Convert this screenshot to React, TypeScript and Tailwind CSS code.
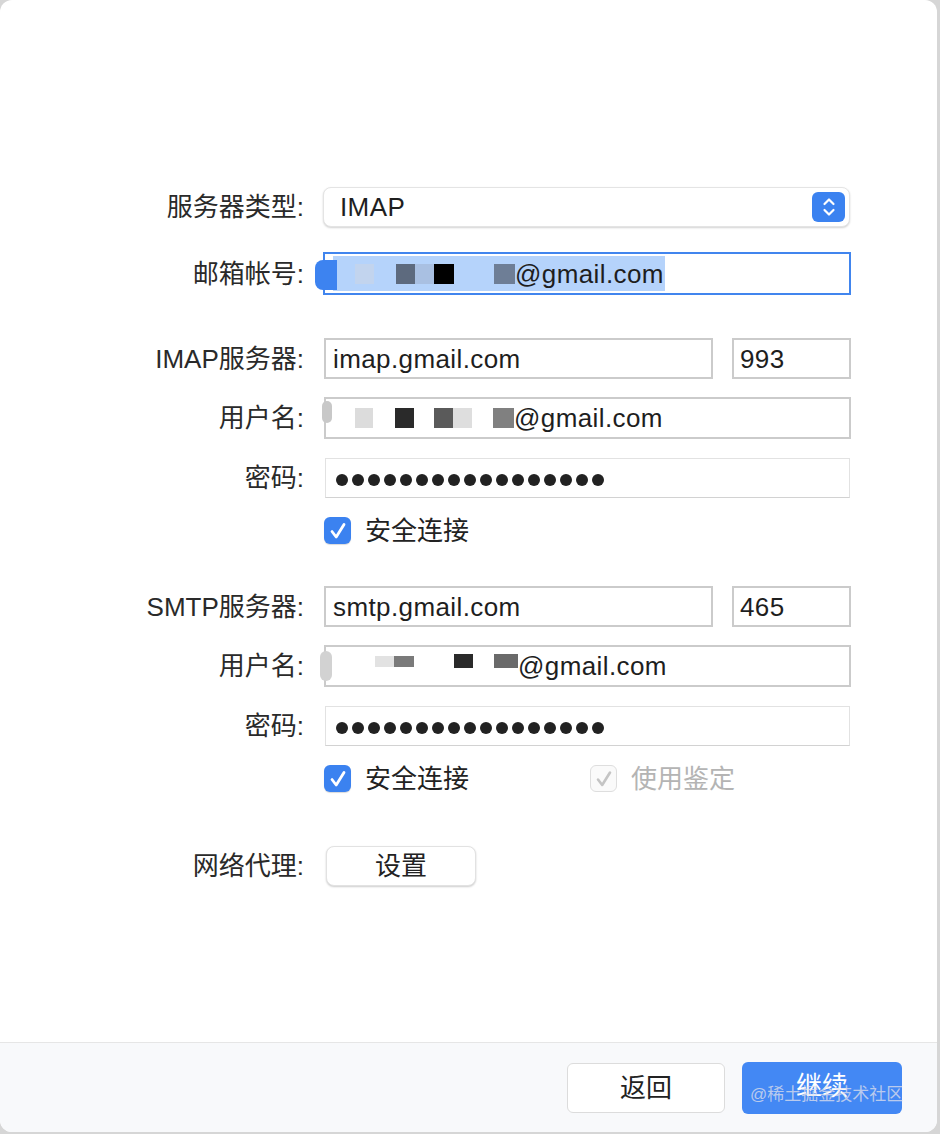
import React from "react";

const FONT = "font-['Liberation_Sans','Noto_Sans_CJK_SC',sans-serif]";

function Label({ children }: { children: React.ReactNode }) {
  return (
    <div className="w-[305px] shrink-0 text-right text-[26px] leading-none text-[#2a2a2a] pr-[1px]">
      {children}
    </div>
  );
}

function Val({ children }: { children: React.ReactNode }) {
  return <span className="text-[26px] text-[#1e1e1e] leading-none tracking-[0.4px]">{children}</span>;
}

function Dots() {
  return (
    <div className="flex items-center gap-[4px] mt-[3px]">
      {Array.from({ length: 17 }).map((_, i) => (
        <span key={i} className="block w-[12px] h-[12px] rounded-full bg-[#222]" />
      ))}
    </div>
  );
}

function Check({ disabled }: { disabled?: boolean }) {
  return disabled ? (
    <span className="flex items-center justify-center w-[27px] h-[27px] rounded-[6px] border border-[#dedede] bg-[#fafafa]">
      <svg width="22" height="22" viewBox="0 0 22 22" fill="none">
        <path d="M5 11.5l4.2 5.5L17 4.5" stroke="#c4c4c4" strokeWidth="2.6" strokeLinecap="round" strokeLinejoin="round" />
      </svg>
    </span>
  ) : (
    <span className="flex items-center justify-center w-[27px] h-[27px] rounded-[6px] bg-[#3b82f0] shadow-[0_1px_1px_rgba(0,0,0,0.15)]">
      <svg width="22" height="22" viewBox="0 0 22 22" fill="none">
        <path d="M5 11.5l4.2 5.5L17 4.5" stroke="#fff" strokeWidth="2.8" strokeLinecap="round" strokeLinejoin="round" />
      </svg>
    </span>
  );
}

function Sq({ c, w = 19, h = 20, y = 0 }: { c: string; w?: number; h?: number; y?: number }) {
  return <span className="inline-block shrink-0" style={{ background: c, width: w, height: h, marginTop: y }} />;
}

export default function App() {
  return (
    <div className={`w-[940px] h-[1134px] bg-[#d6d6d6] ${FONT}`}>
      <div className="w-[937px] h-[1132px] bg-white rounded-[12px] overflow-hidden flex flex-col">
        <div className="flex-1 flex flex-col pt-[187px]">
          {/* 服务器类型 */}
          <div className="flex items-center h-[40px]">
            <Label>服务器类型:</Label>
            <div className="ml-[18px] w-[527px] h-[40px] rounded-[8px] bg-white border border-[#e4e4e4] shadow-[0_1px_2px_rgba(0,0,0,0.18)] flex items-center justify-between pl-[16px] pr-[4px]">
              <Val>IMAP</Val>
              <span className="flex items-center justify-center w-[33px] h-[30px] rounded-[6px] bg-[#3b82f0]">
                <svg width="16" height="22" viewBox="0 0 16 22" fill="none">
                  <path d="M3.5 8L8 3.5 12.5 8" stroke="#fff" strokeWidth="2.2" strokeLinecap="round" strokeLinejoin="round" />
                  <path d="M3.5 14L8 18.5 12.5 14" stroke="#fff" strokeWidth="2.2" strokeLinecap="round" strokeLinejoin="round" />
                </svg>
              </span>
            </div>
          </div>

          {/* 邮箱帐号 */}
          <div className="flex items-center h-[43px] mt-[25px]">
            <Label>邮箱帐号:</Label>
            <div className="relative ml-[18px] w-[528px] h-[43px] border-2 border-[#4185ee] bg-white flex items-center pl-[8px]">
              <span className="absolute left-[-10px] top-[6px] w-[22px] h-[30px] rounded-l-[8px] bg-[#3d83f0]" />
              <div className="flex items-center h-[35px] bg-[#b5d3fb] pr-[1px]">
                <span className="w-[22px]" />
                <Sq c="#c2d4ee" />
                <span className="w-[22px]" />
                <Sq c="#5d6a7e" />
                <Sq c="#a9c0e2" />
                <Sq c="#000" w={20} />
                <span className="w-[40px]" />
                <Sq c="#6e7e96" w={21} />
                <Val>@gmail.com</Val>
              </div>
            </div>
          </div>

          {/* IMAP服务器 */}
          <div className="flex items-center h-[41px] mt-[43px]">
            <Label>IMAP服务器:</Label>
            <div className="ml-[19px] w-[389px] h-[41px] border-2 border-[#cbcbcb] flex items-center pl-[7px]">
              <Val>imap.gmail.com</Val>
            </div>
            <div className="ml-[19px] w-[119px] h-[41px] border-2 border-[#cbcbcb] flex items-center pl-[6px]">
              <Val>993</Val>
            </div>
          </div>

          {/* 用户名 */}
          <div className="flex items-center h-[42px] mt-[18px]">
            <Label>用户名:</Label>
            <div className="relative ml-[19px] w-[527px] h-[42px] border-2 border-[#cbcbcb] flex items-center pl-[29px]">
              <span className="absolute left-[-4px] top-[2px] w-[10px] h-[22px] rounded-[5px] bg-[#c8c8c8]" />
              <Sq c="#dcdcdc" w={18} />
              <span className="w-[22px]" />
              <Sq c="#2a2a2a" />
              <span className="w-[20px]" />
              <Sq c="#5a5a5a" />
              <Sq c="#dedede" />
              <span className="w-[21px]" />
              <Sq c="#808080" w={21} />
              <Val>@gmail.com</Val>
            </div>
          </div>

          {/* 密码 */}
          <div className="flex items-center h-[40px] mt-[19px]">
            <Label>密码:</Label>
            <div className="ml-[20px] w-[525px] h-[40px] border border-[#e2e2e2] border-b-[#d2d2d2] flex items-center pl-[10px]">
              <Dots />
            </div>
          </div>

          {/* 安全连接 */}
          <div className="flex items-center h-[27px] mt-[19px]">
            <div className="w-[305px] shrink-0" />
            <div className="ml-[19px] flex items-center gap-[14px]">
              <Check />
              <span className="text-[26px] text-[#222] leading-none">安全连接</span>
            </div>
          </div>

          {/* SMTP服务器 */}
          <div className="flex items-center h-[41px] mt-[42px]">
            <Label>SMTP服务器:</Label>
            <div className="ml-[19px] w-[389px] h-[41px] border-2 border-[#cbcbcb] flex items-center pl-[7px]">
              <Val>smtp.gmail.com</Val>
            </div>
            <div className="ml-[19px] w-[119px] h-[41px] border-2 border-[#cbcbcb] flex items-center pl-[6px]">
              <Val>465</Val>
            </div>
          </div>

          {/* 用户名 SMTP */}
          <div className="flex items-center h-[42px] mt-[18px]">
            <Label>用户名:</Label>
            <div className="relative ml-[19px] w-[527px] h-[42px] border-2 border-[#cbcbcb] flex items-center pl-[49px]">
              <span className="absolute left-[-6px] top-[4px] w-[12px] h-[30px] rounded-[6px] bg-[#d2d2d2]" />
              <Sq c="#e2e2e2" w={19} h={11} y={-10} />
              <Sq c="#7a7a7a" w={20} h={11} y={-10} />
              <span className="w-[40px]" />
              <Sq c="#2a2a2a" w={19} h={14} y={-10} />
              <span className="w-[21px]" />
              <Sq c="#6a6a6a" w={24} h={14} y={-10} />
              <Val>@gmail.com</Val>
            </div>
          </div>

          {/* 密码 SMTP */}
          <div className="flex items-center h-[40px] mt-[19px]">
            <Label>密码:</Label>
            <div className="ml-[20px] w-[525px] h-[40px] border border-[#e2e2e2] border-b-[#d2d2d2] flex items-center pl-[10px]">
              <Dots />
            </div>
          </div>

          {/* 安全连接 + 使用鉴定 */}
          <div className="flex items-center h-[27px] mt-[19px]">
            <div className="w-[305px] shrink-0" />
            <div className="ml-[19px] flex items-center gap-[14px] w-[266px]">
              <Check />
              <span className="text-[26px] text-[#222] leading-none">安全连接</span>
            </div>
            <div className="flex items-center gap-[14px]">
              <Check disabled />
              <span className="text-[26px] text-[#b4b4b4] leading-none">使用鉴定</span>
            </div>
          </div>

          {/* 网络代理 */}
          <div className="flex items-center h-[40px] mt-[54px]">
            <Label>网络代理:</Label>
            <button className="ml-[21px] w-[150px] h-[40px] rounded-[8px] bg-white border border-[#e2e2e2] shadow-[0_1px_2px_rgba(0,0,0,0.2)] flex items-center justify-center">
              <span className="text-[26px] text-[#222] leading-none">设置</span>
            </button>
          </div>
        </div>

        {/* Footer */}
        <div className="h-[90px] shrink-0 border-t border-[#e6e6e6] bg-[#f8f9fb] flex items-center justify-end pr-[35px] gap-[17px]">
          <button className="w-[158px] h-[50px] rounded-[6px] bg-white border border-[#dcdcdc] flex items-center justify-center">
            <span className="text-[26px] text-[#222] leading-none">返回</span>
          </button>
          <div className="relative">
            <button className="w-[160px] h-[52px] rounded-[6px] bg-[#4388f4] flex items-center justify-center">
              <span className="text-[26px] text-white leading-none -mt-[4px]">继续</span>
            </button>
            <span className="absolute left-[8px] top-[24px] text-[17px] leading-none text-[rgba(225,225,235,0.75)] whitespace-nowrap">
              @稀土掘金技术社区
            </span>
          </div>
        </div>
      </div>
    </div>
  );
}
